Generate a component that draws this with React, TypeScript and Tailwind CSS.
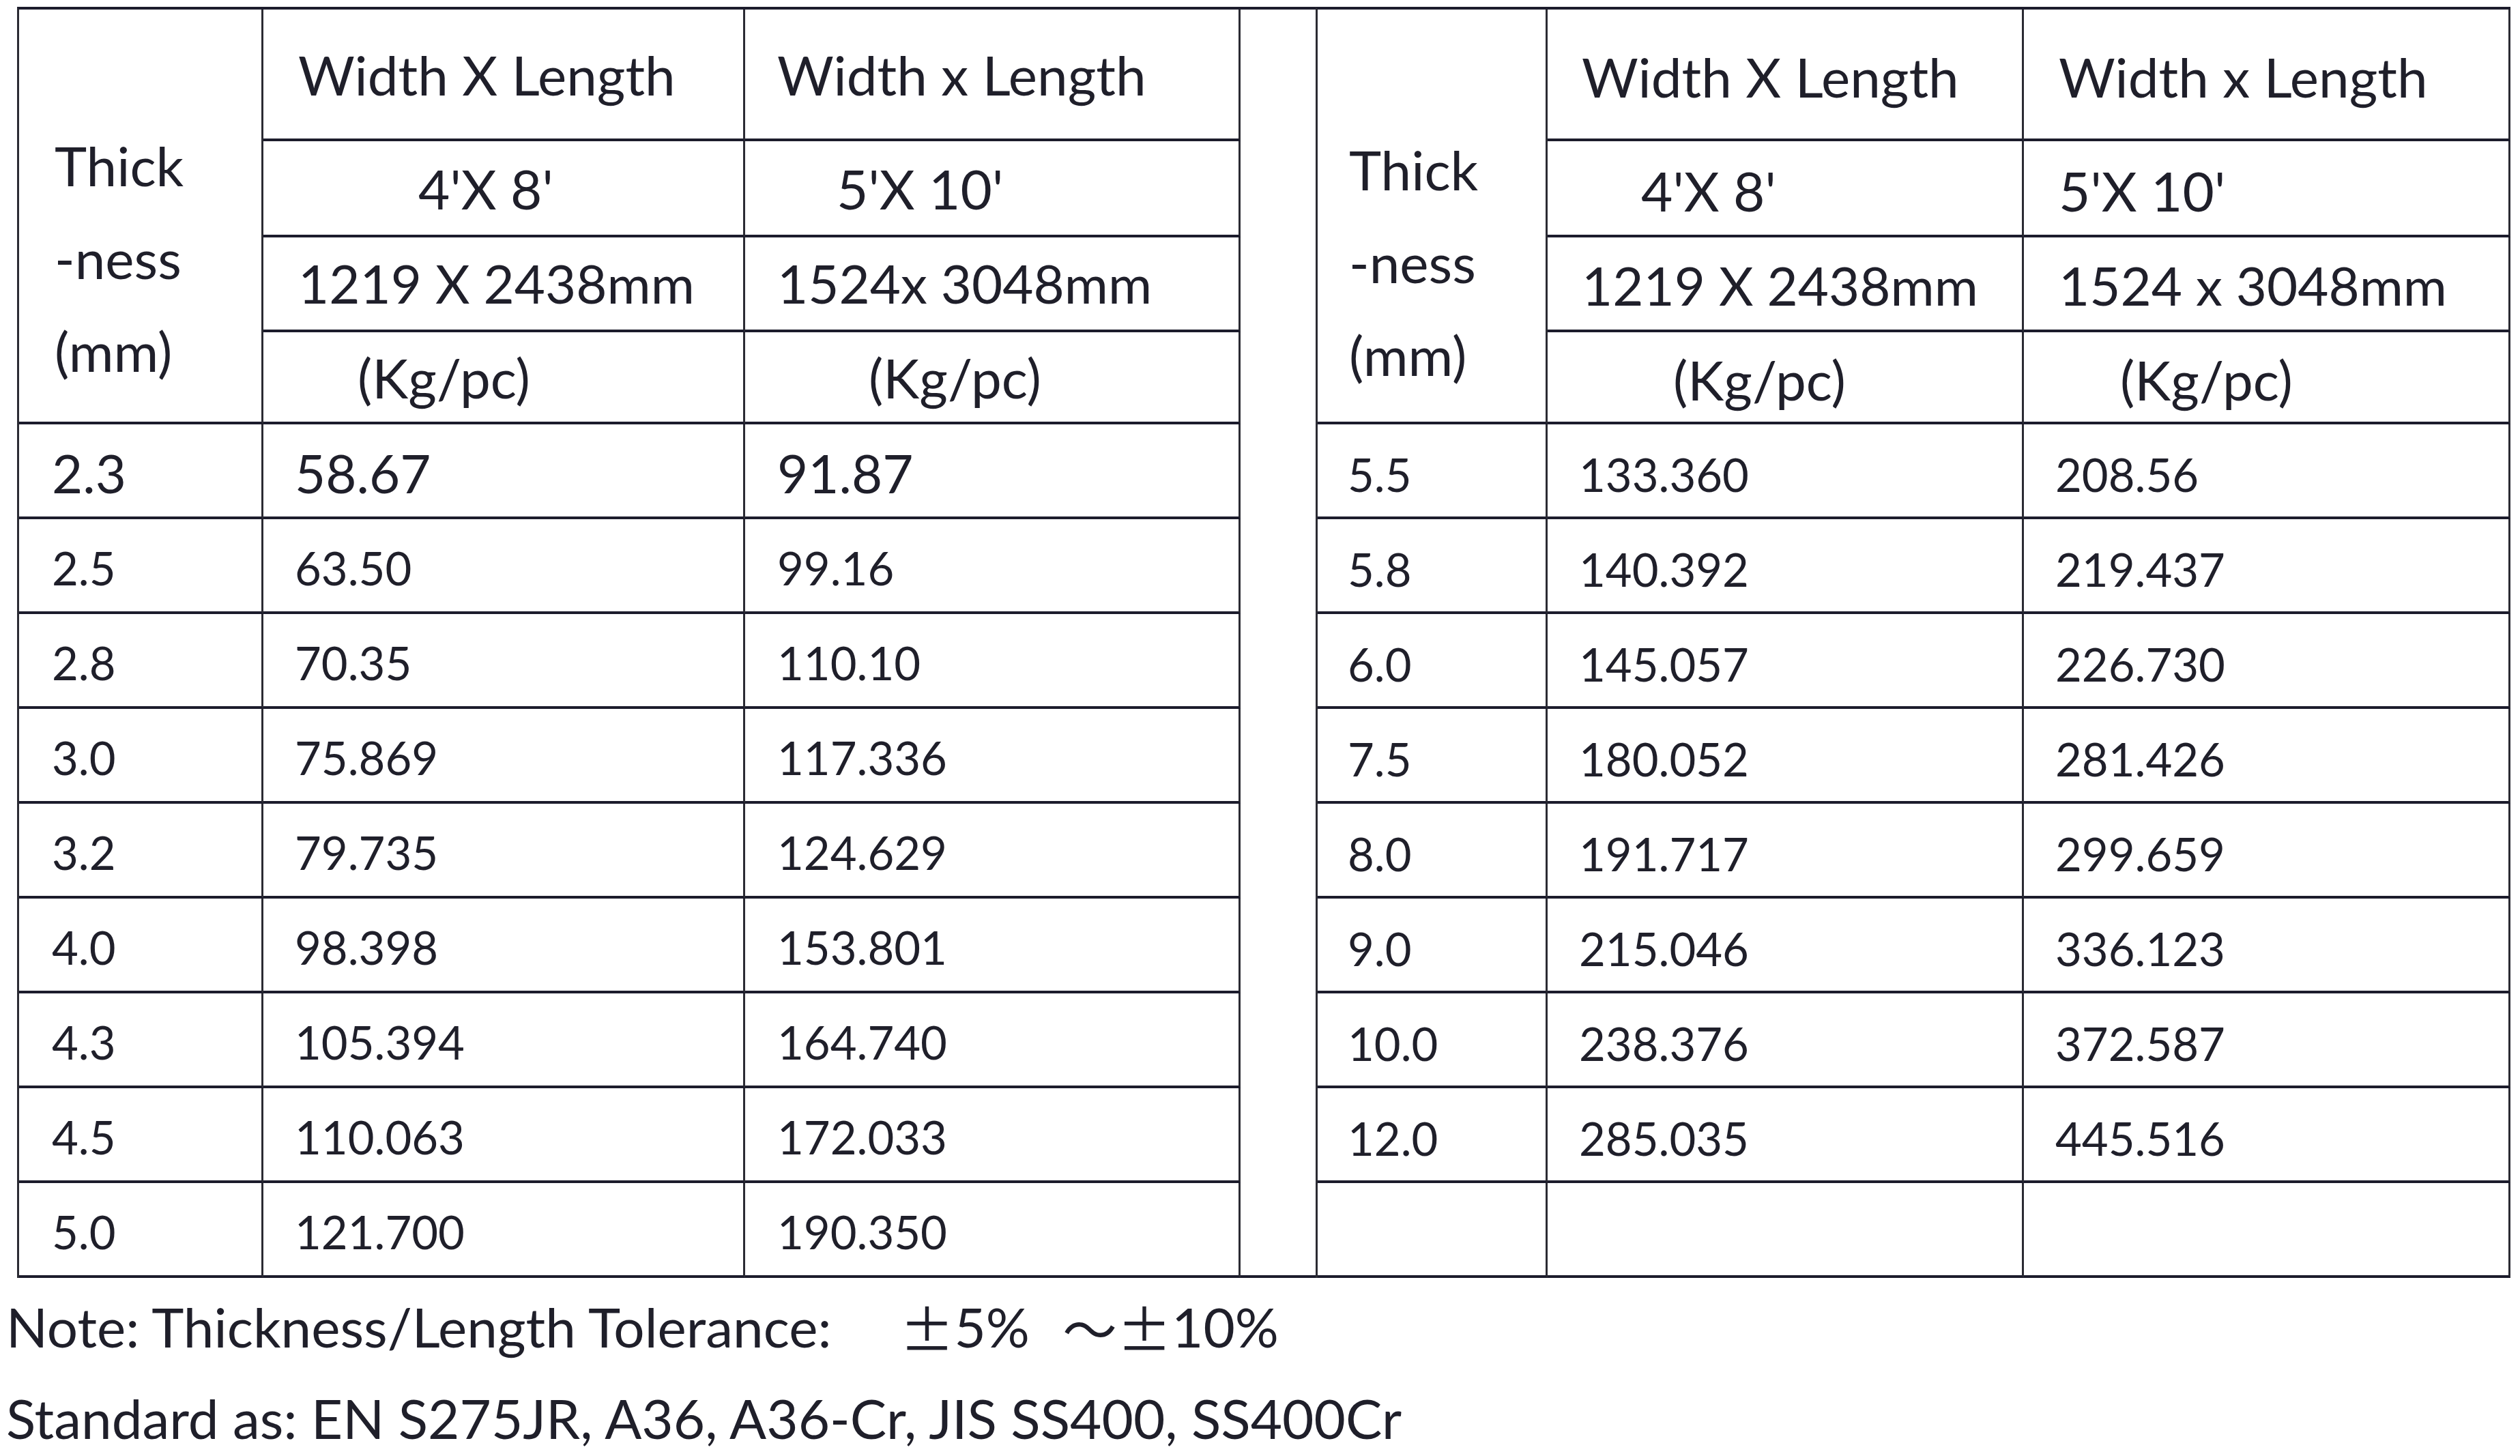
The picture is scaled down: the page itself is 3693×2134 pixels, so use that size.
import React from "react";

const left = {
  rows: [
    ["2.3", "58.67", "91.87"],
    ["2.5", "63.50", "99.16"],
    ["2.8", "70.35", "110.10"],
    ["3.0", "75.869", "117.336"],
    ["3.2", "79.735", "124.629"],
    ["4.0", "98.398", "153.801"],
    ["4.3", "105.394", "164.740"],
    ["4.5", "110.063", "172.033"],
    ["5.0", "121.700", "190.350"],
  ] as [string, string, string][],
};

const right = {
  rows: [
    ["5.5", "133.360", "208.56"],
    ["5.8", "140.392", "219.437"],
    ["6.0", "145.057", "226.730"],
    ["7.5", "180.052", "281.426"],
    ["8.0", "191.717", "299.659"],
    ["9.0", "215.046", "336.123"],
    ["10.0", "238.376", "372.587"],
    ["12.0", "285.035", "445.516"],
    ["", "", ""],
  ] as [string, string, string][],
};

const cell = "border-r-[3px] border-b-[4px] border-r-[#2b2b33] border-b-[#1c1c2c] flex items-center";

function LeftTable() {
  return (
    <div className="grid grid-cols-[358px_706px_726px] grid-rows-[193px_141px_139px_135px_repeat(9,139px)] border-l-[3px] border-t-[4px] border-l-[#2b2b33] border-t-[#1c1c2c]">
      <div className={`${cell} row-span-4 items-start`}>
        <div className="pl-[52px] pt-[160px] text-[80px] leading-[136px]">
          <div>Thick</div>
          <div>-ness</div>
          <div>(mm)</div>
        </div>
      </div>
      <div className={`${cell} pl-[51px] text-[80px]`}>Width X Length</div>
      <div className={`${cell} pl-[47px] text-[80px]`}>Width x Length</div>
      <div className={`${cell} pl-[227px] text-[80px]`}>4'X 8'</div>
      <div className={`${cell} pl-[134px] text-[80px]`}>5'X 10'</div>
      <div className={`${cell} pl-[51px] text-[78px]`}>1219 X 2438mm</div>
      <div className={`${cell} pl-[47px] text-[78px]`}>1524x 3048mm</div>
      <div className={`${cell} pl-[138px] text-[80px]`}>(Kg/pc)</div>
      <div className={`${cell} pl-[181px] text-[80px]`}>(Kg/pc)</div>
      {left.rows.map((r, i) => (
        <React.Fragment key={i}>
          <div className={`${cell} pl-[48px] pt-[8px] ${i === 0 ? "text-[78px]" : "text-[67px]"}`}>{r[0]}</div>
          <div className={`${cell} pl-[46px] pt-[8px] ${i === 0 ? "text-[78px]" : "text-[67px]"}`}>{r[1]}</div>
          <div className={`${cell} pl-[47px] pt-[8px] ${i === 0 ? "text-[78px]" : "text-[67px]"}`}>{r[2]}</div>
        </React.Fragment>
      ))}
    </div>
  );
}

function RightTable() {
  return (
    <div className="grid grid-cols-[337px_698px_713px] grid-rows-[193px_141px_139px_135px_repeat(9,139px)] border-l-[3px] border-t-[4px] border-l-[#2b2b33] border-t-[#1c1c2c]">
      <div className={`${cell} row-span-4 items-start`}>
        <div className="pl-[46px] pt-[166px] text-[80px] leading-[136px]">
          <div>Thick</div>
          <div>-ness</div>
          <div>(mm)</div>
        </div>
      </div>
      <div className={`${cell} pl-[50px] pt-[6px] text-[80px]`}>Width X Length</div>
      <div className={`${cell} pl-[51px] pt-[6px] text-[80px]`}>Width x Length</div>
      <div className={`${cell} pl-[137px] pt-[6px] text-[80px]`}>4'X 8'</div>
      <div className={`${cell} pl-[51px] pt-[6px] text-[80px]`}>5'X 10'</div>
      <div className={`${cell} pl-[50px] pt-[6px] text-[78px]`}>1219 X 2438mm</div>
      <div className={`${cell} pl-[51px] pt-[6px] text-[78px]`}>1524 x 3048mm</div>
      <div className={`${cell} pl-[184px] pt-[6px] text-[80px]`}>(Kg/pc)</div>
      <div className={`${cell} pl-[141px] pt-[6px] text-[80px]`}>(Kg/pc)</div>
      {right.rows.map((r, i) => (
        <React.Fragment key={i}>
          <div className={`${cell} pl-[44px] pt-[12px] text-[67px]`}>{r[0]}</div>
          <div className={`${cell} pl-[46px] pt-[12px] text-[67px]`}>{r[1]}</div>
          <div className={`${cell} pl-[46px] pt-[12px] text-[67px]`}>{r[2]}</div>
        </React.Fragment>
      ))}
    </div>
  );
}

const cjk = { fontFamily: "'Noto Sans CJK SC', sans-serif" };

export default function App() {
  return (
    <div
      className="w-[3693px] h-[2134px] bg-white text-[#1f1f2a] overflow-hidden"
      style={{ fontFamily: "Lato, 'Noto Sans', sans-serif" }}
    >
      <div className="pl-[25px] pt-[10px]">
        <div className="flex">
          <LeftTable />
          <div className="w-[110px] border-t-[4px] border-b-[4px] border-t-[#1c1c2c] border-b-[#1c1c2c]" />
          <RightTable />
        </div>
      </div>
      <div className="pl-[9px] pt-[4px] text-[80px] leading-[134px]">
        <div className="flex whitespace-pre">
          <span>Note: Thickness/Length Tolerance:</span>
          <span className="ml-[100px]" style={cjk}>±</span>
          <span>5%</span>
          <span className="ml-[48px]" style={cjk}>～±</span>
          <span>10%</span>
        </div>
        <div className="whitespace-pre">Standard as: EN S275JR, A36, A36-Cr, JIS SS400, SS400Cr</div>
      </div>
    </div>
  );
}
